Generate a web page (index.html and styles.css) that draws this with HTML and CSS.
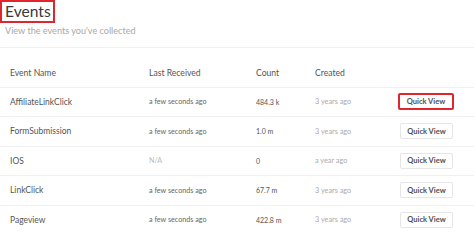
FILE: index.html
```html
<!DOCTYPE html>
<html>
<head>
    <meta name="viewport" content="width=device-width, initial-scale=1.0">
    <link rel="stylesheet" href="styles.css">
</head>
<body>
    <div class="page">
        <div class="header">
            <div class="title">Events</div>
            <div class="subtitle">View the events you've collected</div>
        </div>
        <table class="events">
            <colgroup>
                <col class="w-name">
                <col class="w-last">
                <col class="w-count">
                <col class="w-created">
                <col>
            </colgroup>
            <thead>
                <tr>
                    <th class="name">Event Name</th>
                    <th>Last Received</th>
                    <th>Count</th>
                    <th>Created</th>
                    <th></th>
                </tr>
            </thead>
            <tbody>
                <tr>
                    <td class="name">AffiliateLinkClick</td>
                    <td class="last">a few seconds ago</td>
                    <td class="count">484.3 k</td>
                    <td class="created">3 years ago</td>
                    <td class="action"><button class="btn btn-active">Quick View</button></td>
                </tr>
                <tr>
                    <td class="name">FormSubmission</td>
                    <td class="last">a few seconds ago</td>
                    <td class="count">1.0 m</td>
                    <td class="created">3 years ago</td>
                    <td class="action"><button class="btn">Quick View</button></td>
                </tr>
                <tr>
                    <td class="name">IOS</td>
                    <td class="last muted">N/A</td>
                    <td class="count">0</td>
                    <td class="created">a year ago</td>
                    <td class="action"><button class="btn">Quick View</button></td>
                </tr>
                <tr>
                    <td class="name">LinkClick</td>
                    <td class="last">a few seconds ago</td>
                    <td class="count">67.7 m</td>
                    <td class="created">3 years ago</td>
                    <td class="action"><button class="btn">Quick View</button></td>
                </tr>
                <tr>
                    <td class="name">Pageview</td>
                    <td class="last">a few seconds ago</td>
                    <td class="count">422.8 m</td>
                    <td class="created">3 years ago</td>
                    <td class="action"><button class="btn">Quick View</button></td>
                </tr>
            </tbody>
        </table>
    </div>
</body>
</html>
```

FILE: styles.css
```css
body {
    margin: 0;
    background: white;
    font-family: Lato, "Open Sans", Arial, sans-serif;
    color: #444;
}

.page {
    width: 474px;
    overflow: hidden;
}

.header {
    border-bottom: 1px solid #f0f0f0;
    height: 48px;
    box-sizing: border-box;
}

.title {
    display: inline-block;
    font-size: 15.6px;
    line-height: 19px;
    padding: 0 2px 0 3px;
    border: 2px solid #e0262c;
    color: #3a3a3a;
}

.subtitle {
    font-size: 9.1px;
    color: #a8a8a8;
    margin: 2px 0 0 5px;
}

.events {
    width: 474px;
    table-layout: fixed;
    border-collapse: collapse;
}

.w-name { width: 149px; }
.w-last { width: 107px; }
.w-count { width: 59px; }
.w-created { width: 73px; }

.events th {
    text-align: left;
    font-weight: normal;
    font-size: 8.6px;
    color: #555;
    height: 39px;
    padding: 12px 0 0 0;
    border-bottom: 1px solid #f0f0f0;
    box-sizing: border-box;
}

.events td {
    font-size: 8.5px;
    color: #555;
    height: 28.5px;
    padding: 0;
    border-bottom: 1px solid #f0f0f0;
    white-space: nowrap;
}

.events tr:last-child td {
    border-bottom: none;
}

.events th.name,
.events td.name {
    padding-left: 10px;
}

.events td.last {
    font-size: 7.2px;
    color: #666;
}

.events td.last.muted {
    color: #bbb;
}

.events td.count {
    font-size: 7px;
}

.events td.created {
    font-size: 7.3px;
    color: #aaa;
}

.events td.action {
    padding-left: 12px;
}

.btn {
    font-family: Lato, "Open Sans", Arial, sans-serif;
    font-size: 7.5px;
    font-weight: 700;
    color: #505050;
    background: white;
    border: 1px solid #e6e6e6;
    border-radius: 2px;
    width: 53px;
    height: 16px;
    padding: 0;
    cursor: pointer;
}

.btn-active {
    border: 2px solid #e0262c;
    width: 56px;
    height: 17px;
    margin-left: -2px;
}
```
